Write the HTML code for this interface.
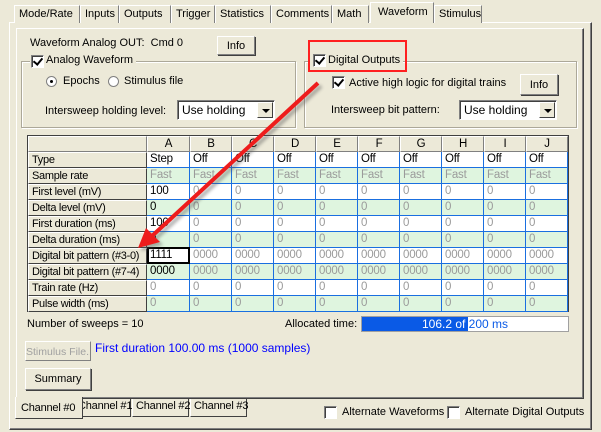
<!DOCTYPE html>
<html><head><meta charset="utf-8"><style>
*{box-sizing:border-box;margin:0;padding:0;white-space:nowrap}
body{width:601px;height:432px;background:#ECE9D8;font-family:"Liberation Sans",sans-serif;font-size:11px;color:#000;position:relative;overflow:hidden}
.a{position:absolute}
.tab{position:absolute;top:5px;height:18px;border:1px solid #fff;border-right-color:#808080;border-bottom:none;padding:2px 0 0 4px;background:#ECE9D8;overflow:hidden}
.btn{position:absolute;background:#ECE9D8;border:1px solid;border-color:#fff #808080 #808080 #fff;box-shadow:1px 1px 0 #404040;text-align:center;overflow:hidden}
.grp{position:absolute;border:1px solid #aca899;box-shadow:inset 1px 1px 0 #fff,1px 1px 0 #fff}
.chk{position:absolute;width:13px;height:13px;background:#fff;border:1px solid;border-color:#808080 #fff #fff #808080;box-shadow:inset 1px 1px 0 #404040}
.chk.on::after{content:"";position:absolute;left:3px;top:0px;width:4px;height:7px;border:solid #000;border-width:0 2px 2px 0;transform:rotate(40deg)}
.combo{position:absolute;height:20px;background:#fff;border:1px solid;border-color:#808080 #fff #fff #808080;box-shadow:inset 1px 1px 0 #404040;padding:2px 0 0 4px;font-size:12px}
.combo i{position:absolute;right:1px;top:1px;width:16px;height:16px;background:#ECE9D8;border:1px solid;border-color:#fff #404040 #404040 #fff}
.combo i::after{content:"";position:absolute;left:4px;top:6px;border:4px solid transparent;border-top:4px solid #000;border-bottom:none}
.c{position:absolute;height:16px;font-size:11.5px;line-height:15px;padding-left:3px;overflow:hidden;letter-spacing:-0.2px}
.h{background:#ECE9D8;border:1px solid;border-color:#fff #808080 #808080 #fff;text-align:center;padding:0}
.l{background:#ECE9D8;border:1px solid;border-color:#fff #404040 #404040 #fff;font-size:11px;letter-spacing:-0.3px}
.w{background:#fff;border-right:1px solid #1a6fe0;border-bottom:1px solid #1a6fe0}
.g{background:#dff5df;border-right:1px solid #1a6fe0;border-bottom:1px solid #1a6fe0}
.gr{color:#9a9a9a}
.ct{position:absolute;top:399px;height:18px;border:1px solid;border-color:#fff #404040 #404040 #fff;border-top:none;padding:1px 0 0 3px;font-size:11px;letter-spacing:-0.2px;background:#ECE9D8;width:57px}
</style></head><body>
<div class="a" style="left:9px;top:22px;width:583px;height:408px;border:1px solid;border-color:#fff #404040 #404040 #fff;box-shadow:inset -1px -1px 0 #808080"></div>
<div class="tab" style="left:14px;width:66px">Mode/Rate</div>
<div class="tab" style="left:80px;width:39px">Inputs</div>
<div class="tab" style="left:119px;width:52px">Outputs</div>
<div class="tab" style="left:171px;width:44px">Trigger</div>
<div class="tab" style="left:215px;width:56px">Statistics</div>
<div class="tab" style="left:271px;width:61px">Comments</div>
<div class="tab" style="left:332px;width:37px">Math</div>
<div class="tab" style="left:370px;top:2px;height:21px;width:64px;padding:3px 0 0 7px;z-index:2">Waveform</div>
<div class="tab" style="left:434px;width:48px">Stimulus</div>
<div class="a" style="left:16px;top:28px;width:568px;height:371px;border:1px solid;border-color:#fff #404040 #404040 #fff;box-shadow:inset -1px -1px 0 #808080"></div>

<div class="a" style="left:30px;top:37px">Waveform Analog OUT:&nbsp; Cmd 0</div>
<div class="btn" style="left:217px;top:36px;width:38px;height:19px;padding-top:3px">Info</div>
<div class="grp" style="left:21px;top:61px;width:275px;height:67px"></div>
<div class="a" style="left:30px;top:53px;background:#ECE9D8;padding:0 3px 0 16px;height:15px;padding-top:1px">Analog Waveform</div>
<div class="chk on" style="left:31px;top:55px"></div>
<div class="a" style="left:46px;top:76px;width:11px;height:11px;border-radius:50%;background:#fff;border:1px solid #808080"><div style="position:absolute;left:3px;top:3px;width:3px;height:3px;background:#000;border-radius:50%"></div></div>
<div class="a" style="left:63px;top:75px">Epochs</div>
<div class="a" style="left:108px;top:76px;width:11px;height:11px;border-radius:50%;background:#fff;border:1px solid #808080"></div>
<div class="a" style="left:124px;top:75px">Stimulus file</div>
<div class="a" style="left:45px;top:105px">Intersweep holding level:</div>
<div class="combo" style="left:177px;top:100px;width:98px">Use holding<i></i></div>

<div class="grp" style="left:304px;top:61px;width:273px;height:67px"></div>
<div class="a" style="left:310px;top:53px;background:#ECE9D8;padding:1px 3px 0 18px;height:15px">Digital Outputs</div>
<div class="chk on" style="left:313px;top:54px"></div>
<div class="a" style="left:308px;top:40px;width:99px;height:32px;border:2px solid #ff2020"></div>
<div class="chk on" style="left:332px;top:76px"></div>
<div class="a" style="left:349px;top:77px">Active high logic for digital trains</div>
<div class="btn" style="left:520px;top:74px;width:38px;height:21px;padding-top:4px">Info</div>
<div class="a" style="left:331px;top:104px">Intersweep bit pattern:</div>
<div class="combo" style="left:459px;top:100px;width:98px">Use holding<i></i></div>

<div id="grid"></div>
<script>
var cols=[147,190,232,274,316,358,400,442,484,526,568];
var labels=["Type","Sample rate","First level (mV)","Delta level (mV)","First duration (ms)","Delta duration (ms)","Digital bit pattern (#3-0)","Digital bit pattern (#7-4)","Train rate (Hz)","Pulse width (ms)"];
var A=["Step","Fast","100","0","100","0","1111","0000","0","0"];
var O=["Off","Fast","0","0","0","0","0000","0000","0","0"];
var h='<div class="a" style="left:27px;top:135px;width:542px;height:177px;border:1px solid #404040;background:#808080"></div>';
h+='<div class="c h" style="left:28px;top:136px;width:119px;height:16px"></div>';
var L="ABCDEFGHIJ";
for(var i=0;i<10;i++)h+='<div class="c h" style="left:'+cols[i]+'px;top:136px;width:'+(cols[i+1]-cols[i])+'px;height:16px">'+L[i]+'</div>';
for(var r=0;r<10;r++){var y=152+r*16;
h+='<div class="c l" style="left:28px;top:'+y+'px;width:119px">'+labels[r]+'</div>';
for(var i=0;i<10;i++){var cls=(r%2)?'g':'w';var t=i?O[r]:A[r];var gr=(i==0?(r==1||r>=8):(r>0));
h+='<div class="c '+cls+(gr?' gr':'')+'" style="left:'+cols[i]+'px;top:'+y+'px;width:'+(cols[i+1]-cols[i])+'px">'+t+'</div>';}}
h+='<div class="a" style="left:147px;top:247px;width:43px;height:17px;border:2px solid #000"></div>';
document.getElementById('grid').innerHTML=h;
</script>

<div class="a" style="left:27px;top:318px">Number of sweeps = 10</div>
<div class="a" style="left:285px;top:318px">Allocated time:</div>
<div class="a" style="left:361px;top:316px;width:208px;height:16px;background:#fff;border:1px solid #a0a0a0"></div>
<div class="a" style="left:362px;top:317px;width:206px;height:14px;text-align:center;color:#0a5ae6;font-size:12px;line-height:14px">106.2 of 200 ms</div>
<div class="a" style="left:362px;top:317px;width:106px;height:14px;background:#0a5ae6;overflow:hidden"><div style="width:206px;text-align:center;color:#fff;font-size:12px;line-height:14px">106.2 of 200 ms</div></div>
<div class="btn" style="left:25px;top:341px;width:66px;height:20px;padding-top:4px;color:#a0a0a0;box-shadow:none;font-size:10.5px">Stimulus File...</div>
<div class="a" style="left:95px;top:341px;color:#0000ff;font-size:12px">First duration 100.00 ms (1000 samples)</div>
<div class="btn" style="left:25px;top:368px;width:66px;height:22px;padding-top:4px">Summary</div>

<div class="ct" style="left:74px">Channel #1</div>
<div class="ct" style="left:132px">Channel #2</div>
<div class="ct" style="left:190px">Channel #3</div>
<div class="ct" style="left:15px;top:397px;height:22px;width:68px;padding:5px 0 0 5px;z-index:2;border-bottom:1px solid #404040">Channel #0</div>
<div class="chk" style="left:324px;top:406px"></div>
<div class="a" style="left:342px;top:406px">Alternate Waveforms</div>
<div class="chk" style="left:447px;top:406px"></div>
<div class="a" style="left:465px;top:406px">Alternate Digital Outputs</div>

<svg class="a" style="left:0;top:0" width="601" height="432">
<defs><filter id="s" x="-20%" y="-20%" width="140%" height="140%"><feGaussianBlur stdDeviation="1.5"/></filter></defs>
<g transform="translate(3,3)" opacity="0.45" filter="url(#s)"><line x1="318" y1="83" x2="152" y2="236" stroke="#555" stroke-width="4"/><polygon points="138,248 146,228 160,242" fill="#555"/></g>
<line x1="318" y1="83" x2="152" y2="236" stroke="#ee1c1c" stroke-width="4"/>
<polygon points="138,248 146,228 160,242" fill="#ee1c1c"/>
</svg>
</body></html>
